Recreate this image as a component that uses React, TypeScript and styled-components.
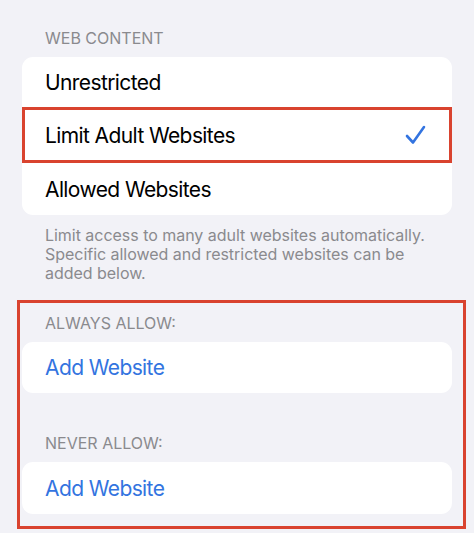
import { FC } from "react"
import styled, { createGlobalStyle } from "styled-components"

const Global = createGlobalStyle`
html, body{
  margin: 0;
  padding: 0;
  background: #f2f2f7;
  font-family: Inter, "Liberation Sans", sans-serif;
  -webkit-font-smoothing: antialiased;
}
`

const Page = styled.main`
width: 474px;
height: 533px;
box-sizing: border-box;
padding: 28px 22px 0 22px;
overflow: hidden;
`

const Caption = styled.div`
font: 400 16px/20px Inter, "Liberation Sans", sans-serif;
color: #8a8a8e;
text-transform: uppercase;
padding-left: 23px;
margin-bottom: 9px;
`

const Card = styled.div`
background: #fff;
border-radius: 11px;
overflow: hidden;
`

const Row = styled.div<{ $h: number; $marked?: boolean }>`
height: ${p => p.$h}px;
box-sizing: border-box;
display: flex;
align-items: center;
justify-content: space-between;
font: 400 21px Inter, "Liberation Sans", sans-serif;
letter-spacing: -0.6px;
color: #000;
border: ${p => (p.$marked ? "3px solid #d9432f" : "none")};
padding-left: ${p => (p.$marked ? 20 : 23)}px;
padding-right: ${p => (p.$marked ? 23 : 26)}px;
`

const Link = styled(Row)`
color: #3374e0;
`

const Footer = styled.p`
margin: 11px 0 0 0;
padding: 0 10px 0 23px;
font: 400 16px/19px Inter, "Liberation Sans", sans-serif;
letter-spacing: -0.03px;
color: #8a8a8e;
`

const Marked = styled.section`
margin: 17px -14px 0 -5px;
padding: 10px 11px 12px 2px;
border: 3px solid #d9432f;
`

const Gap = styled.div`
height: 40px;
`

const Check: FC = () => (
  <svg width="21" height="20" viewBox="0 0 21 20">
    <path d="M2 11 L8 17.5 L19 2" fill="none" stroke="#3374e0" strokeWidth="2.6" strokeLinecap="round" strokeLinejoin="round" />
  </svg>
)

export default function App() {
  return (
    <Page>
      <Global />
      <Caption>Web Content</Caption>
      <Card>
        <Row $h={50}>Unrestricted</Row>
        <Row $h={56} $marked>
          Limit Adult Websites
          <Check />
        </Row>
        <Row $h={52}>Allowed Websites</Row>
      </Card>
      <Footer>
        Limit access to many adult websites automatically. Specific allowed and restricted websites can be added below.
      </Footer>
      <Marked>
        <Caption>Always Allow:</Caption>
        <Card>
          <Link $h={51}>Add Website</Link>
        </Card>
        <Gap />
        <Caption>Never Allow:</Caption>
        <Card>
          <Link $h={52}>Add Website</Link>
        </Card>
      </Marked>
    </Page>
  )
}
